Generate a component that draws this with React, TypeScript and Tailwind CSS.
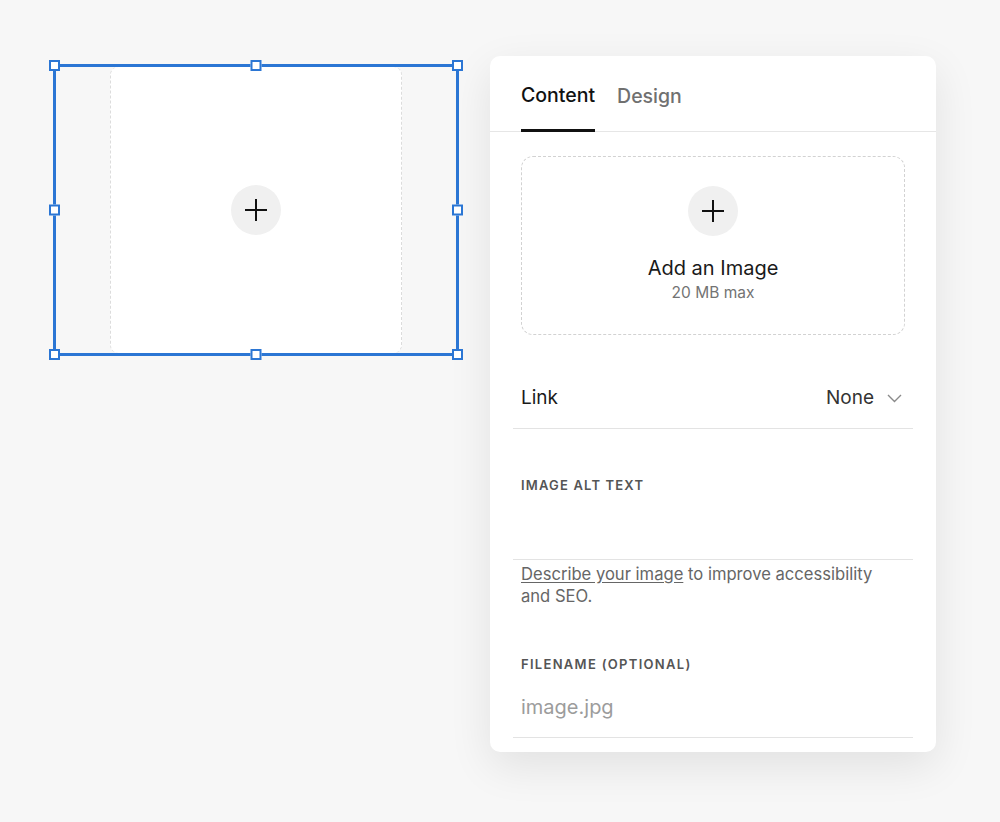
import React from 'react';

const font = { fontFamily: 'Inter, "Noto Sans", sans-serif' };

const PlusIcon: React.FC = () => (
    <svg width="24" height="24" viewBox="0 0 24 24" fill="none" stroke="#111" strokeWidth={2}>
        <path d="M12 1v22M1 12h22" />
    </svg>
);

const Handle: React.FC<{ className: string }> = ({ className }) => (
    <div className={`absolute w-[11px] h-[11px] bg-white border-2 border-[#2b76d4] ${className}`} />
);

const App: React.FC = () => {
    return (
        <div className="w-[1000px] h-[822px] bg-[#f7f7f7] flex items-start overflow-hidden" style={font}>
            {/* Canvas block */}
            <div className="relative mt-[64px] ml-[53px] w-[406px] h-[292px] border-[3px] border-[#2b76d4] flex justify-center">
                <div className="w-[292px] h-full bg-white border-x border-dashed border-[#dcdcdc] rounded-[8px] flex items-center justify-center">
                    <div className="w-[50px] h-[50px] rounded-full bg-[#f0f0f0] flex items-center justify-center">
                        <PlusIcon />
                    </div>
                </div>
                <Handle className="-left-[7px] -top-[7px]" />
                <Handle className="left-1/2 -translate-x-1/2 -top-[7px]" />
                <Handle className="-right-[7px] -top-[7px]" />
                <Handle className="-left-[7px] top-1/2 -translate-y-1/2" />
                <Handle className="-right-[7px] top-1/2 -translate-y-1/2" />
                <Handle className="-left-[7px] -bottom-[7px]" />
                <Handle className="left-1/2 -translate-x-1/2 -bottom-[7px]" />
                <Handle className="-right-[7px] -bottom-[7px]" />
            </div>

            {/* Settings panel */}
            <div className="mt-[56px] ml-[31px] w-[446px] h-[696px] bg-white rounded-[10px] shadow-[0_14px_44px_rgba(0,0,0,0.09)]">
                <div className="h-[76px] border-b border-[#e6e6e6] px-[31px] flex gap-[22px]">
                    <div className="h-[76px] -mb-px pt-[6px] flex items-center border-b-[3px] border-[#111] text-[19.5px] font-medium text-[#111]">
                        Content
                    </div>
                    <div className="h-[76px] pt-[6px] flex items-center text-[19.5px] font-medium text-[#707070]">
                        Design
                    </div>
                </div>

                <div className="mt-[24px] mx-[31px] h-[179px] border border-dashed border-[#d2d2d2] rounded-[12px] flex flex-col items-center">
                    <div className="mt-[29px] w-[50px] h-[50px] rounded-full bg-[#f0f0f0] flex items-center justify-center">
                        <PlusIcon />
                    </div>
                    <div className="mt-[19px] text-[20px] leading-[26px] text-[#1a1a1a]">Add an Image</div>
                    <div className="mt-[3px] text-[15.5px] leading-[18px] text-[#737373]">20 MB max</div>
                </div>

                <div className="mt-[33px] mx-[23px] h-[61px] border-b border-[#e3e3e3] px-[8px] flex items-center justify-between">
                    <span className="text-[19px] text-[#1a1a1a]">Link</span>
                    <div className="flex items-center gap-[13px] pr-[3px]">
                        <span className="text-[19px] text-[#333]">None</span>
                        <svg width="15" height="9" viewBox="0 0 15 9" fill="none" stroke="#8a8a8a" strokeWidth={1.4}>
                            <path d="M1 1l6.5 6.5L14 1" />
                        </svg>
                    </div>
                </div>

                <div className="mx-[23px] pt-[48px] h-[131px] border-b border-[#e3e3e3] px-[8px]">
                    <div className="text-[13px] leading-[16px] font-semibold tracking-[0.09em] text-[#555]">IMAGE ALT TEXT</div>
                </div>
                <p className="mt-[3px] mx-[31px] w-[362px] text-[16.6px] leading-[22px] text-[#666]">
                    <span className="underline underline-offset-2">Describe your image</span> to improve accessibility and SEO.
                </p>

                <div className="mx-[23px] pt-[49px] border-b border-[#e3e3e3] px-[8px] pb-[18px]">
                    <div className="text-[13px] leading-[16px] font-semibold tracking-[0.1em] text-[#555]">FILENAME (OPTIONAL)</div>
                    <div className="mt-[23px] text-[20px] leading-[24px] text-[#9c9c9c]">image.jpg</div>
                </div>
            </div>
        </div>
    );
};

export default App;
